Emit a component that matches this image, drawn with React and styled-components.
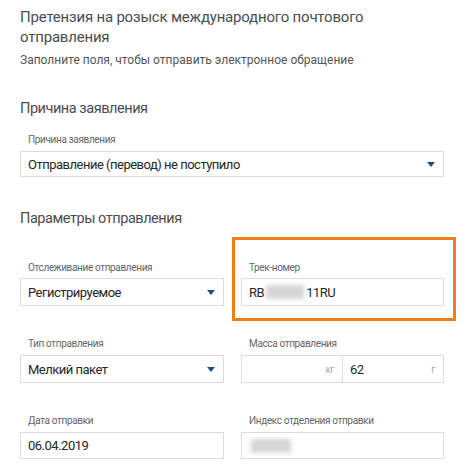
import React from 'react'
import styled, { createGlobalStyle } from 'styled-components'

const GlobalStyle = createGlobalStyle`
  body {
    margin: 0;
    background: #fff;
    font-family: Roboto, "Open Sans", Arial, sans-serif;
  }
`

const Page = styled.div`
  padding: 7px 20px 0 20px;
  width: 424px;
`

const Title = styled.h1`
  margin: 0;
  font-size: 15px;
  line-height: 20px;
  letter-spacing: -0.2px;
  font-weight: 400;
  color: #4d4d4d;
`

const Subtitle = styled.p`
  margin: 5px 0 0;
  font-size: 12px;
  line-height: 16px;
  color: #555;
`

const SectionTitle = styled.h2`
  margin: ${p => p.$top || 30}px 0 0;
  font-size: 14.5px;
  line-height: 21px;
  letter-spacing: -0.45px;
  font-weight: 400;
  color: #4d4d4d;
`

const Grid = styled.div`
  display: grid;
  grid-template-columns: 204px 203px;
  column-gap: 17px;
  row-gap: 31px;
  margin-top: ${p => p.$top || 0}px;
`

const Field = styled.div`
  position: relative;
  display: flex;
  flex-direction: column;
  gap: ${p => p.$gap || 3}px;
  margin-top: ${p => p.$top || 0}px;
`

const Label = styled.span`
  padding-left: 8px;
  font-size: 10px;
  line-height: 14px;
  letter-spacing: -0.35px;
  color: #666;
`

const Box = styled.div`
  box-sizing: border-box;
  height: ${p => p.$h || 28}px;
  border: 1px solid #dcdcdc;
  display: flex;
  align-items: center;
  padding: 0 8px 0 7px;
  font-size: 13px;
  letter-spacing: -0.5px;
  color: #262626;
  background: #fff;
`

const Value = styled.span`
  flex: 1;
  display: flex;
  align-items: center;
`

const Arrow = styled.span`
  width: 0;
  height: 0;
  border-left: 4px solid transparent;
  border-right: 4px solid transparent;
  border-top: 5px solid #1d4f7c;
`

const Blur = styled.span`
  display: inline-block;
  width: ${p => p.$w}px;
  height: 14px;
  background: #d6d6d6;
  filter: blur(2px);
  margin: ${p => p.$m || '0'};
`

const Split = styled.div`
  box-sizing: border-box;
  height: 28px;
  border: 1px solid #dcdcdc;
  display: grid;
  grid-template-columns: 100px 1fr;
`

const Part = styled.div`
  display: flex;
  align-items: center;
  padding: 0 8px 0 7px;
  font-size: 13px;
  letter-spacing: -0.5px;
  color: #262626;
  & + & {
    border-left: 1px solid #dcdcdc;
  }
`

const Unit = styled.span`
  margin-left: auto;
  font-size: 10px;
  color: #aaa;
`

const Highlight = styled.div`
  position: absolute;
  left: -9px;
  right: -12px;
  top: -24px;
  bottom: -15px;
  border: 3.5px solid #f07e1b;
  pointer-events: none;
`

const Select = ({ h, children }) => (
  <Box $h={h}>
    <Value>{children}</Value>
    <Arrow />
  </Box>
)

export default function App() {
  return (
    <Page>
      <GlobalStyle />
      <Title>Претензия на розыск международного почтового отправления</Title>
      <Subtitle>Заполните поля, чтобы отправить электронное обращение</Subtitle>

      <SectionTitle $top={30}>Причина заявления</SectionTitle>
      <Field $gap={4} $top={14}>
        <Label>Причина заявления</Label>
        <Select h={26}>Отправление (перевод) не поступило</Select>
      </Field>

      <SectionTitle $top={31}>Параметры отправления</SectionTitle>
      <Grid $top={32}>
        <Field>
          <Label>Отслеживание отправления</Label>
          <Select>Регистрируемое</Select>
        </Field>
        <Field>
          <Highlight />
          <Label>Трек-номер</Label>
          <Box>
            <Value>RB<Blur $w={38} $m="0 2px 0 2px" />11RU</Value>
          </Box>
        </Field>

        <Field $gap={4}>
          <Label>Тип отправления</Label>
          <Select>Мелкий пакет</Select>
        </Field>
        <Field $gap={4}>
          <Label>Масса отправления</Label>
          <Split>
            <Part><Unit>кг</Unit></Part>
            <Part>62<Unit>г</Unit></Part>
          </Split>
        </Field>

        <Field $gap={4}>
          <Label>Дата отправки</Label>
          <Box $h={27}>06.04.2019</Box>
        </Field>
        <Field $gap={4}>
          <Label>Индекс отделения отправки</Label>
          <Box $h={27}>
            <Blur $w={40} $m="0 0 0 2px" />
          </Box>
        </Field>
      </Grid>
    </Page>
  )
}
